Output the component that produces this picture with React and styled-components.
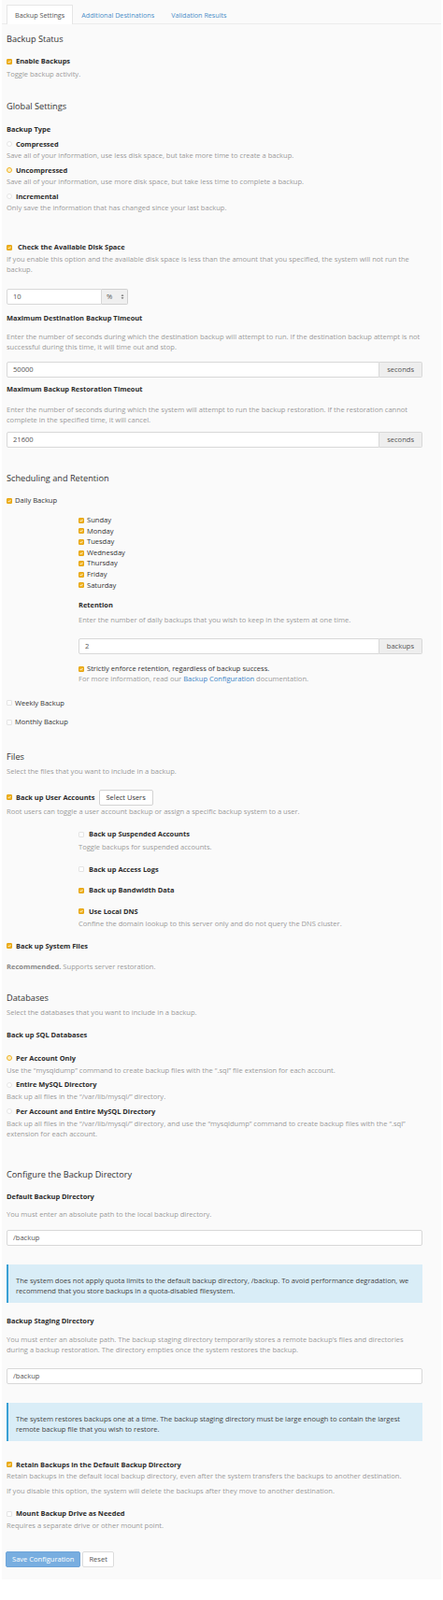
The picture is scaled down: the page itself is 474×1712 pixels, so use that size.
import React from 'react'
import styled, { createGlobalStyle } from 'styled-components'

const GlobalStyle = createGlobalStyle`
  * { box-sizing: border-box; }
  body {
    margin: 0;
    background: #fff;
    font-family: "Open Sans", "Liberation Sans", sans-serif;
  }
`

const mt = (p) => `${p.$mt || 0}px`

const Panel = styled.div`
  margin: 0 2px;
  background: #fafafa;
  color: #333;
  font-size: 7.55px;
  line-height: 11px;
`

const TabBar = styled.div`
  display: flex;
  padding: 5px 0 0 5px;
  border-bottom: 1px solid #ececec;
`

const Tab = styled.div`
  height: 21px;
  line-height: 20px;
  padding: 0 8px;
  margin-bottom: -1px;
  font-size: 7.2px;
  border: 1px solid ${({ $active }) => ($active ? '#e6e6e6' : 'transparent')};
  border-bottom: none;
  background: ${({ $active }) => ($active ? '#fff' : 'transparent')};
  color: ${({ $active }) => ($active ? '#555' : '#4a8fc9')};
`

const Content = styled.div`
  padding: 0 20px 13px 5px;
`

const Heading = styled.h2`
  margin: ${mt} 0 0;
  font-size: 9.2px;
  line-height: 13px;
  font-weight: 400;
  color: #333;
`

const Label = styled.div`
  margin-top: ${mt};
  font-weight: 700;
  font-size: 7.45px;
  color: #2b2b2b;
`

const Help = styled.p`
  margin: ${mt} 0 0;
  color: #9a9a9a;
  b {
    color: #888;
  }
`

const Link = styled.a`
  color: #3d85c6;
  text-decoration: none;
`

const OptionRow = styled.div`
  display: flex;
  align-items: center;
  gap: ${({ $gap }) => $gap ?? 4}px;
  margin-top: ${mt};
  font-weight: ${({ $bold }) => ($bold ? 700 : 400)};
  font-size: ${({ $bold }) => ($bold ? '7.45px' : '7.55px')};
  color: ${({ $bold }) => ($bold ? '#2b2b2b' : '#333')};
`

const Box = styled.span`
  flex: none;
  width: 6px;
  height: 6px;
  border-radius: 1px;
  display: inline-flex;
  align-items: center;
  justify-content: center;
  background: ${({ $on }) => ($on ? '#f0b323' : '#fff')};
  border: 1px solid ${({ $on }) => ($on ? '#e6a615' : '#e4e4e4')};
`

const Dot = styled.span`
  flex: none;
  width: 6px;
  height: 6px;
  border-radius: 50%;
  background: ${({ $on }) => ($on ? '#fdeec6' : '#fff')};
  border: ${({ $on }) => ($on ? '1.6px solid #f0b323' : '1px solid #e6e6e6')};
`

const Indent = styled.div`
  padding-left: 77px;
`

const DayList = styled.div`
  margin-top: ${mt};
  line-height: 11.6px;
`

const InputRow = styled.div`
  display: flex;
  height: 17px;
  margin-top: ${mt};
  width: ${({ $width }) => $width || '100%'};
`

const TextInput = styled.input`
  flex: 1;
  min-width: 0;
  height: 100%;
  margin: 0;
  padding: 0 6px;
  font: inherit;
  color: #555;
  background: #fff;
  border: 1px solid #d8d8d8;
  border-radius: ${({ $alone }) => ($alone ? '2px' : '2px 0 0 2px')};
  outline: none;
`

const Addon = styled.span`
  flex: none;
  display: flex;
  align-items: center;
  padding: 0 8px;
  color: #555;
  background: #eee;
  border: 1px solid #d8d8d8;
  border-left: none;
  border-radius: 0 2px 2px 0;
`

const UnitSelect = styled.div`
  flex: none;
  width: 28px;
  display: flex;
  align-items: center;
  justify-content: space-between;
  padding: 0 3px 0 5px;
  color: #555;
  background: #efefef;
  border: 1px solid #d0d0d0;
  border-left: none;
  border-radius: 0 2px 2px 0;
`

const SmallButton = styled.button`
  height: 17px;
  padding: 0 7px;
  margin: 0;
  font: inherit;
  font-weight: 400;
  color: #333;
  background: #fff;
  border: 1px solid #d3d3d3;
  border-radius: 2px;
`

const Alert = styled.div`
  margin-top: ${mt};
  padding: 12px 10px 7px 8px;
  background: #d9edf7;
  border-left: 2px solid #3aa0d5;
  color: #444;
`

const Actions = styled.div`
  display: flex;
  gap: 2px;
  margin-top: ${mt};
  margin-left: -1px;
`

const ActionButton = styled.button`
  height: 17px;
  padding: 0 6px;
  margin: 0;
  font: inherit;
  border-radius: 2px;
  color: ${({ $primary }) => ($primary ? '#fff' : '#555')};
  background: ${({ $primary }) => ($primary ? '#78aee0' : '#fff')};
  border: 1px solid ${({ $primary }) => ($primary ? '#6ea5d9' : '#dcdcdc')};
`

const CheckMark = () => (
  <svg width='4' height='4' viewBox='0 0 8 8'>
    <path d='M1.3 4.2l1.9 1.9 3.6-4' stroke='#fff' strokeWidth='1.6' fill='none' />
  </svg>
)

const Arrows = () => (
  <svg width='4' height='7' viewBox='0 0 4 7'>
    <path d='M0.5 2.8L2 1l1.5 1.8zM0.5 4.2L2 6l1.5-1.8z' fill='#666' />
  </svg>
)

function Check({ on, bold, mt, gap, children }) {
  return (
    <OptionRow $mt={mt} $bold={bold} $gap={gap}>
      <Box $on={on}>{on && <CheckMark />}</Box>
      {children}
    </OptionRow>
  )
}

function Radio({ on, mt, children }) {
  return (
    <OptionRow $mt={mt} $bold $gap={4}>
      <Dot $on={on} />
      <span>{children}</span>
    </OptionRow>
  )
}

function Field({ value, unit, mt }) {
  return (
    <InputRow $mt={mt}>
      <TextInput defaultValue={value} readOnly $alone={!unit} />
      {unit && <Addon>{unit}</Addon>}
    </InputRow>
  )
}

const days = ['Sunday', 'Monday', 'Tuesday', 'Wednesday', 'Thursday', 'Friday', 'Saturday']

export default function App() {
  return (
    <>
      <GlobalStyle />
      <Panel>
        <TabBar>
          <Tab $active>Backup Settings</Tab>
          <Tab>Additional Destinations</Tab>
          <Tab>Validation Results</Tab>
        </TabBar>
        <Content>
          <Heading $mt={8.5}>Backup Status</Heading>
          <Check on bold mt={12.5}>
            <span>Enable Backups</span>
          </Check>
          <Help $mt={2.5}>Toggle backup activity.</Help>

          <Heading $mt={22}>Global Settings</Heading>
          <Label $mt={13}>Backup Type</Label>
          <Radio mt={5}>Compressed</Radio>
          <Help $mt={1}>Save all of your information, use less disk space, but take more time to create a backup.</Help>
          <Radio on mt={5}>Uncompressed</Radio>
          <Help $mt={1}>Save all of your information, use more disk space, but take less time to complete a backup.</Help>
          <Radio mt={5}>Incremental</Radio>
          <Help $mt={1.5}>Only save the information that has changed since your last backup.</Help>

          <Check on bold gap={6} mt={31}>
            <span>Check the Available Disk Space</span>
          </Check>
          <Help $mt={2}>
            If you enable this option and the available disk space is less than the amount that you specified, the
            system will not run the backup.
          </Help>
          <InputRow $mt={14.5} $width='130px'>
            <TextInput defaultValue='10' readOnly />
            <UnitSelect>
              <span>%</span>
              <Arrows />
            </UnitSelect>
          </InputRow>

          <Label $mt={9.5}>Maximum Destination Backup Timeout</Label>
          <Help $mt={9}>
            Enter the number of seconds during which the destination backup will attempt to run. If the destination
            backup attempt is not successful during this time, it will time out and stop.
          </Help>
          <Field mt={9.5} value='50000' unit='seconds' />

          <Label $mt={7.5}>Maximum Backup Restoration Timeout</Label>
          <Help $mt={11}>
            Enter the number of seconds during which the system will attempt to run the backup restoration. If the
            restoration cannot complete in the specified time, it will cancel.
          </Help>
          <Field mt={6.5} value='21600' unit='seconds' />

          <Heading $mt={26}>Scheduling and Retention</Heading>
          <Check on gap={3} mt={12.5}>
            <span>Daily Backup</span>
          </Check>
          <Indent>
            <DayList $mt={10}>
              {days.map((d) => (
                <Check key={d} on gap={3}>
                  <span>{d}</span>
                </Check>
              ))}
            </DayList>
            <Label $mt={10}>Retention</Label>
            <Help $mt={5}>Enter the number of daily backups that you wish to keep in the system at one time.</Help>
            <Field mt={13.5} value='2' unit='backups' />
            <Check on gap={3} mt={10.5}>
              <span>Strictly enforce retention, regardless of backup success.</span>
            </Check>
            <Help>
              For more information, read our <Link href='#'>Backup Configuration</Link> documentation.
            </Help>
          </Indent>
          <Check gap={3} mt={14.5}>
            <span>Weekly Backup</span>
          </Check>
          <Check gap={3} mt={9.5}>
            <span>Monthly Backup</span>
          </Check>

          <Heading $mt={25}>Files</Heading>
          <Help $mt={3.5}>Select the files that you want to include in a backup.</Help>
          <OptionRow $mt={14} $bold $gap={4}>
            <Box $on>
              <CheckMark />
            </Box>
            <span>Back up User Accounts</span>
            <SmallButton>Select Users</SmallButton>
          </OptionRow>
          <Help $mt={1}>Root users can toggle a user account backup or assign a specific backup system to a user.</Help>
          <Indent>
            <Check bold gap={5} mt={13.5}>
              <span>Back up Suspended Accounts</span>
            </Check>
            <Help $mt={2.5}>Toggle backups for suspended accounts.</Help>
            <Check bold gap={5} mt={13}>
              <span>Back up Access Logs</span>
            </Check>
            <Check on bold gap={5} mt={11.5}>
              <span>Back up Bandwidth Data</span>
            </Check>
            <Check on bold gap={5} mt={11.5}>
              <span>Use Local DNS</span>
            </Check>
            <Help $mt={2}>Confine the domain lookup to this server only and do not query the DNS cluster.</Help>
          </Indent>
          <Check on bold mt={13}>
            <span>Back up System Files</span>
          </Check>
          <Help $mt={11}>
            <b>Recommended.</b> Supports server restoration.
          </Help>

          <Heading $mt={21.5}>Databases</Heading>
          <Help $mt={3.5}>Select the databases that you want to include in a backup.</Help>
          <Label $mt={13}>Back up SQL Databases</Label>
          <Radio on mt={14}>Per Account Only</Radio>
          <Help $mt={2}>Use the “mysqldump” command to create backup files with the “.sql” file extension for each account.</Help>
          <Radio mt={4.5}>Entire MySQL Directory</Radio>
          <Help $mt={2}>Back up all files in the “/var/lib/mysql/” directory.</Help>
          <Radio mt={4.5}>Per Account and Entire MySQL Directory</Radio>
          <Help $mt={2}>
            Back up all files in the “/var/lib/mysql/” directory, and use the “mysqldump” command to create backup
            files with the “.sql” extension for each account.
          </Help>

          <Heading $mt={31.5}>Configure the Backup Directory</Heading>
          <Label $mt={12}>Default Backup Directory</Label>
          <Help $mt={8}>You must enter an absolute path to the local backup directory.</Help>
          <Field mt={10.5} value='/backup' />
          <Alert $mt={20}>
            The system does not apply quota limits to the default backup directory, /backup. To avoid performance
            degradation, we recommend that you store backups in a quota-disabled filesystem.
          </Alert>

          <Label $mt={14.5}>Backup Staging Directory</Label>
          <Help $mt={9}>
            You must enter an absolute path. The backup staging directory temporarily stores a remote backup’s files
            and directories during a backup restoration. The directory empties once the system restores the backup.
          </Help>
          <Field mt={13.5} value='/backup' />
          <Alert $mt={20}>
            The system restores backups one at a time. The backup staging directory must be large enough to contain the
            largest remote backup file that you wish to restore.
          </Alert>

          <Check on bold mt={20}>
            <span>Retain Backups in the Default Backup Directory</span>
          </Check>
          <Help $mt={1.5}>
            Retain backups in the default local backup directory, even after the system transfers the backups to another
            destination.
          </Help>
          <Help $mt={4.5}>If you disable this option, the system will delete the backups after they move to another destination.</Help>
          <Check bold mt={13.5}>
            <span>Mount Backup Drive as Needed</span>
          </Check>
          <Help $mt={2}>Requires a separate drive or other mount point.</Help>

          <Actions $mt={21.5}>
            <ActionButton $primary>Save Configuration</ActionButton>
            <ActionButton>Reset</ActionButton>
          </Actions>
        </Content>
      </Panel>
    </>
  )
}
